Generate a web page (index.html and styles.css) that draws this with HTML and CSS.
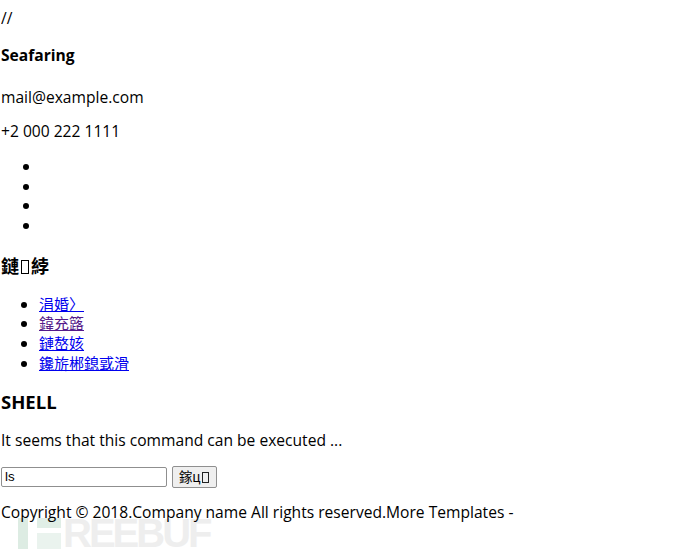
FILE: index.html
```html
<!DOCTYPE html>
<html>
<head>
<meta charset="utf-8">
<link rel="stylesheet" href="styles.css">
</head>
<body>
<div class="slashes">//</div>
<h4 class="brand">Seafaring</h4>
<p class="contact mail">mail@example.com</p>
<p class="contact phone">+2 000 222 1111</p>
<ul class="social">
  <li></li>
  <li></li>
  <li></li>
  <li></li>
</ul>
<h3 class="section-title">鏈<span class="tofu"></span>綍</h3>
<ul class="nav">
  <li><a href="#" class="link">涓婚〉</a></li>
  <li><a href="#" class="link visited">鍏充簬</a></li>
  <li><a href="#" class="link">鏈嶅姟</a></li>
  <li><a href="#" class="link">鑱旂郴鎴戜滑</a></li>
</ul>
<h3 class="shell-title">SHELL</h3>
<p class="note">It seems that this command can be executed ...</p>
<form class="cmd">
  <input class="cmd-input" type="text" value="ls"><button class="cmd-btn" type="button">鎵ц<span class="tofu small"></span></button>
</form>
<p class="copy">Copyright © 2018.Company name All rights reserved.More Templates -</p>
<div class="watermark">
  <span class="wm-logo"><span class="wm-bar"></span><span class="wm-blocks"><span class="wm-top"></span><span class="wm-bottom"></span></span></span><span class="wm-text">REEBUF</span>
</div>
</body>
</html>
```
FILE: styles.css
```css
html {
  background: #fff;
}
body {
  margin: 8px 8px 8px 1px;
  min-height: 542px;
  font-family: "Open Sans", "Noto Sans CJK SC", sans-serif;
  font-size: 15.6px;
  line-height: 21px;
  color: #000;
  position: relative;
}
.slashes {
  margin: 0;
}
.brand {
  margin: 16px 0 0;
  font-size: 15.6px;
  font-weight: bold;
}
.contact.mail {
  margin: 21px 0 0;
}
.contact.phone {
  margin: 13px 0 0;
}
.social {
  margin: 15px 0 0;
  padding-left: 40px;
}
.social li, .nav li {
  height: 19.7px;
  line-height: 19.7px;
}
.section-title {
  margin: 17px 0 0;
  font-size: 18px;
  line-height: 24px;
  font-family: "Noto Sans CJK SC", sans-serif;
  font-weight: bold;
}
.tofu {
  display: inline-block;
  width: 8px;
  height: 14px;
  border: 1px solid #000;
  box-sizing: border-box;
  margin: 0 2px;
  vertical-align: -1px;
}
.tofu.small {
  width: 7px;
  height: 11px;
  margin: 0 1px;
  border-color: #222;
}
.nav {
  margin: 17px 0 0;
  padding-left: 38px;
}
.link {
  color: #0000ee;
  font-family: "Noto Sans CJK SC", sans-serif;
  font-size: 15px;
}
.link.visited {
  color: #551a8b;
}
.shell-title {
  margin: 17px 0 0;
  font-size: 18.5px;
  line-height: 24px;
  font-weight: bold;
}
.note {
  margin: 16px 0 0;
}
.cmd {
  margin: 15px 0 0;
  display: flex;
  align-items: center;
  gap: 5px;
}
.cmd-input {
  width: 166px;
  height: 20px;
  box-sizing: border-box;
  border: 1px solid #8f8f8f;
  border-radius: 2px;
  padding: 1px 3px;
  font-family: "Liberation Sans", sans-serif;
  font-size: 13.33px;
  margin: 0;
}
.cmd-btn {
  height: 22px;
  box-sizing: border-box;
  border: 1px solid #8f8f8f;
  border-radius: 2px;
  background: #efefef;
  padding: 0 6px;
  font-family: "Noto Sans CJK SC", sans-serif;
  font-size: 13.33px;
  margin: 0;
  color: #000;
}
.copy {
  margin: 14px 0 0;
  position: relative;
  z-index: 1;
}
.watermark {
  position: absolute;
  left: 17px;
  top: 510px;
  display: flex;
  align-items: flex-start;
}
.wm-logo {
  display: flex;
  gap: 9px;
  margin-right: 2px;
}
.wm-bar {
  width: 10px;
  height: 31px;
  background: #ddece3;
}
.wm-blocks {
  display: flex;
  flex-direction: column;
  gap: 5px;
}
.wm-top {
  width: 24px;
  height: 10px;
  background: #e0eee6;
}
.wm-bottom {
  width: 24px;
  height: 16px;
  background: #eaf3ee;
}
.wm-text {
  font-family: "Liberation Sans", sans-serif;
  font-weight: bold;
  font-size: 40px;
  line-height: 31px;
  height: 31px;
  color: #eeeeee;
  letter-spacing: -3px;
}
```
